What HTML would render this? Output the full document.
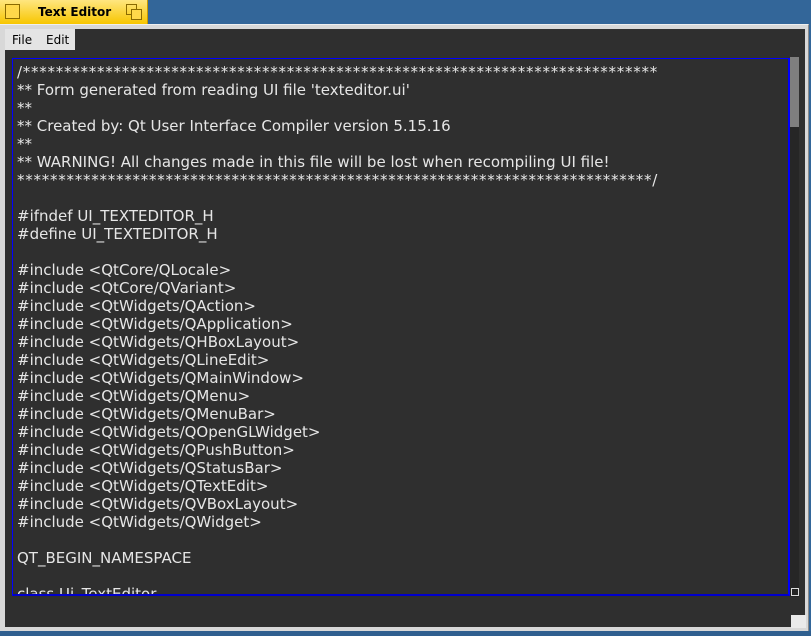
<!DOCTYPE html>
<html><head><meta charset="utf-8"><style>
html,body{margin:0;padding:0;width:811px;height:636px;overflow:hidden;background:#336699;}
body{position:relative;font-family:"DejaVu Sans","Liberation Sans",sans-serif;}
.tab{position:absolute;left:0;top:0;width:147px;height:24px;background:linear-gradient(#ffe680,#f7c600);border-right:1px solid #c89a00;}
.tab .t{position:absolute;left:38px;top:5px;font-size:12px;font-weight:bold;color:#000;}
.ic1{position:absolute;left:5px;top:4px;width:13px;height:13px;border:1px solid #8a6a00;background:#ffd84a;}
.ic2{position:absolute;left:126px;top:4px;width:9px;height:9px;border:1px solid #8a6a00;}
.ic3{position:absolute;left:131px;top:9px;width:9px;height:9px;border:1px solid #8a6a00;background:#ffd84a;}
.frame{position:absolute;left:0;top:24px;width:809px;height:607px;background:#d8d8d8;border-right:1px solid #8a8a8a;border-top:1px solid #efefef;box-sizing:border-box;}
.inner{position:absolute;left:5px;top:29px;width:800px;height:598px;background:#2f2f2f;}
.menu{position:absolute;left:5px;top:29px;width:70px;height:21px;background:#e4e4e4;font-size:12px;color:#000;}
.menu span{position:absolute;top:4px;}
.ed{position:absolute;left:12px;top:58px;width:778px;height:538px;border:1px solid #0000ff;border-right-width:2px;border-bottom:2px solid #0000cc;box-sizing:border-box;overflow:hidden;}
.sb{position:absolute;left:790px;top:57px;width:9px;height:540px;background:#262626;}
.th{position:absolute;left:790px;top:57px;width:9px;height:70px;background:#7f7f7f;}
.corner{position:absolute;left:791px;top:588px;width:6px;height:6px;border:1px solid #ddd;}
.txt{position:absolute;left:4px;top:4px;font-size:15px;line-height:18px;color:#e6e6e6;white-space:pre;letter-spacing:0;}
.st{letter-spacing:0.75px;}
.grip{position:absolute;left:791px;top:615px;width:15px;height:13px;background:#eaeaea;}
.bl{position:absolute;left:0;top:631px;width:811px;height:5px;background:#2f5f8f;}
</style></head><body>
<div class="frame"></div>
<div class="inner"></div>
<div class="tab"><div class="ic1"></div><div class="t">Text Editor</div><div class="ic2"></div><div class="ic3"></div></div>
<div class="menu"><span style="left:7px">File</span><span style="left:41px">Edit</span></div>
<div class="ed"><div class="txt"><span class="st">/*****************************************************************************</span>
** Form generated from reading UI file 'texteditor.ui'
**
** Created by: Qt User Interface Compiler version 5.15.16
**
** WARNING! All changes made in this file will be lost when recompiling UI file!
<span class="st">*****************************************************************************/</span>

#ifndef UI_TEXTEDITOR_H
#define UI_TEXTEDITOR_H

#include &lt;QtCore/QLocale&gt;
#include &lt;QtCore/QVariant&gt;
#include &lt;QtWidgets/QAction&gt;
#include &lt;QtWidgets/QApplication&gt;
#include &lt;QtWidgets/QHBoxLayout&gt;
#include &lt;QtWidgets/QLineEdit&gt;
#include &lt;QtWidgets/QMainWindow&gt;
#include &lt;QtWidgets/QMenu&gt;
#include &lt;QtWidgets/QMenuBar&gt;
#include &lt;QtWidgets/QOpenGLWidget&gt;
#include &lt;QtWidgets/QPushButton&gt;
#include &lt;QtWidgets/QStatusBar&gt;
#include &lt;QtWidgets/QTextEdit&gt;
#include &lt;QtWidgets/QVBoxLayout&gt;
#include &lt;QtWidgets/QWidget&gt;

QT_BEGIN_NAMESPACE

class Ui_TextEditor</div></div>
<div class="sb"></div><div class="th"></div><div class="corner"></div>
<div class="grip"></div>
<div class="bl"></div>
</body></html>
